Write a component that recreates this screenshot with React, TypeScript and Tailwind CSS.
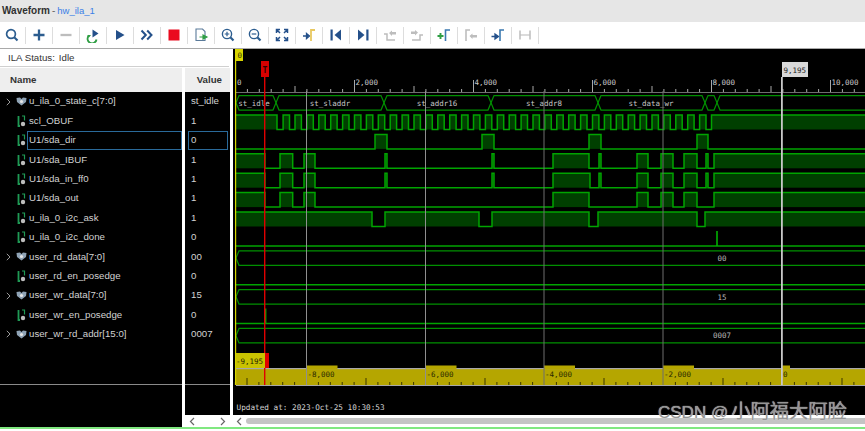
const rows = [
  { name: "u_ila_0_state_c[7:0]", value: "st_idle", bus: true },
  { name: "scl_OBUF", value: "1" },
  { name: "U1/sda_dir", value: "0", selected: true },
  { name: "U1/sda_IBUF", value: "1" },
  { name: "U1/sda_in_ff0", value: "1" },
  { name: "U1/sda_out", value: "1" },
  { name: "u_ila_0_i2c_ask", value: "1" },
  { name: "u_ila_0_i2c_done", value: "0" },
  { name: "user_rd_data[7:0]", value: "00", bus: true },
  { name: "user_rd_en_posedge", value: "0" },
  { name: "user_wr_data[7:0]", value: "15", bus: true },
  { name: "user_wr_en_posedge", value: "0" },
  { name: "user_wr_rd_addr[15:0]", value: "0007", bus: true },
];

const END = 865;
const START = 236;
const rowTop = (i: number) => 95.6 + 19.4 * i;

const sclHighs: number[][] = [[START, 277]];
for (let k = -1; k <= 34; k++) sclHighs.push([295 + 11.9 * k, 295 + 11.9 * k + 6.4]);
sclHighs.push([711.5, END]);

const digital: { row: number; highs: number[][] }[] = [
  { row: 1, highs: sclHighs },
  { row: 2, highs: [[375, 387], [482, 494], [589, 601], [697, 708]] },
  { row: 3, highs: [[START, 265], [280, 292.7], [304, 315], [385, 387], [492, 494], [553, 589], [599, 601], [637, 648], [661, 673], [684, 697], [706, 708], [714, END]] },
  { row: 4, highs: [[START, 265], [280, 292.7], [304, 315], [385, 387], [492, 494], [553, 590], [599, 601], [637, 648], [661, 673], [684, 697], [706, 708], [714, END]] },
  { row: 5, highs: [[START, 265], [280, 292.7], [304, 315], [553, 589], [637, 648], [661, 673], [684, 697], [714, END]] },
  { row: 6, highs: [[START, 372], [385, 479], [492, 589], [598, 697], [705, END]] },
  { row: 7, highs: [] },
  { row: 9, highs: [] },
  { row: 11, highs: [] },
];

const stateSegs = [
  { x1: START, x2: 276, label: "st_idle", cx: 254 },
  { x1: 276, x2: 384, label: "st_sladdr", cx: 330 },
  { x1: 384, x2: 491, label: "st_addr16", cx: 437 },
  { x1: 491, x2: 598, label: "st_addr8", cx: 544 },
  { x1: 598, x2: 705, label: "st_data_wr", cx: 651 },
  { x1: 705, x2: 717, label: "", cx: 0 },
  { x1: 717, x2: END + 6, label: "", cx: 0 },
];

const otherBus = [
  { row: 8, label: "00" },
  { row: 10, label: "15" },
  { row: 12, label: "0007" },
];

const gridLines = [
  { x: 306.5, c: "#8f8f8f" },
  { x: 425.5, c: "#8f8f8f" },
  { x: 544, c: "#6f6f6f" },
  { x: 663, c: "#6f6f6f" },
];

const topLabels = [
  { x: 355.5, t: "2,000" },
  { x: 474.5, t: "4,000" },
  { x: 593.5, t: "6,000" },
  { x: 712.5, t: "8,000" },
  { x: 831.5, t: "10,000" },
];

const bottomTags = [
  { x: 306.5, t: "-8,000", w: 31 },
  { x: 425.5, t: "-6,000", w: 31 },
  { x: 544, t: "-4,000", w: 31 },
  { x: 663, t: "-2,000", w: 31 },
  { x: 782, t: "0", w: 8 },
];

function wavePath(top: number, highs: number[][]) {
  const bot = top + 14.5;
  let d = `M${START} ${highs.length && highs[0][0] <= START ? top : bot}`;
  for (const [a, b] of highs) {
    if (a > START) d += ` L${a} ${bot} L${a} ${top}`;
    d += ` L${b} ${top}`;
    if (b < END) d += ` L${b} ${bot}`;
  }
  if (!highs.length || highs[highs.length - 1][1] < END) d += ` L${END} ${bot}`;
  return d;
}

function hexagon(x1: number, x2: number, top: number) {
  const bot = top + 14.5;
  const mid = top + 7.25;
  return `M${x1} ${mid} L${x1 + 3} ${top} L${x2 - 3} ${top} L${x2} ${mid} L${x2 - 3} ${bot} L${x1 + 3} ${bot} Z`;
}

function Waveform() {
  const topTicks = Array.from({ length: 54 }, (_, k) => k);
  const bottomTicks = Array.from({ length: 54 }, (_, k) => k - 7);

  return (
    <svg width={632} height={366} viewBox="233 49 632 366" className="block bg-black">
      {/* signals */}
      {digital.map((s) => {
        const top = rowTop(s.row);
        return (
          <g key={s.row}>
            {s.highs.map(([a, b]) => (
              <rect key={a} x={a} y={top} width={b - a} height={14.5} fill="#003f00" />
            ))}
            <path d={wavePath(top, s.highs)} fill="none" stroke="#00a400" strokeWidth={1.5} />
          </g>
        );
      })}
      <rect x={716.2} y={231} width={1.6} height={15} fill="#00b000" />
      <rect x={265} y={308.5} width={1.4} height={15} fill="#00b000" />

      {stateSegs.map((s) => (
        <path key={s.x1} d={hexagon(s.x1, s.x2, rowTop(0))} fill="none" stroke="#009000" strokeWidth={1.2} />
      ))}
      {otherBus.map((b) => (
        <path key={b.row} d={hexagon(START, END + 6, rowTop(b.row))} fill="none" stroke="#009000" strokeWidth={1.2} />
      ))}
      {stateSegs.map((s) =>
        s.label ? (
          <text key={s.label} x={s.cx} y={106} textAnchor="middle" className="fill-[#c8c8c8] font-['DejaVu_Sans_Mono'] text-[7.5px]">
            {s.label}
          </text>
        ) : null
      )}
      {otherBus.map((b) => (
        <text key={b.row} x={722} y={rowTop(b.row) + 10} textAnchor="middle" className="fill-[#b8b8b8] font-['DejaVu_Sans_Mono'] text-[7.5px]">
          {b.label}
        </text>
      ))}

      {/* top ruler */}
      <rect x={236} y={92} width={629} height={0.8} fill="#8a8a8a" />
      {topTicks.map((k) => {
        const x = 235 + 11.9 * k;
        const h = k % 10 === 0 ? 12 : k % 5 === 0 ? 6 : 3;
        return <rect key={k} x={x} y={92 - h} width={1} height={h} fill="#a8a8a8" />;
      })}
      <text x={237} y={85} className="fill-[#c8c8c8] font-['DejaVu_Sans_Mono'] text-[7.5px]">0</text>
      {topLabels.map((l) => (
        <text key={l.t} x={l.x} y={85} className="fill-[#c8c8c8] font-['DejaVu_Sans_Mono'] text-[7.5px]">{l.t}</text>
      ))}

      {/* bottom ruler */}
      <rect x={236} y={369} width={629} height={16} fill="#b5a600" />
      <rect x={236} y={368} width={629} height={1.2} fill="#a8a8a8" />
      <rect x={236} y={385} width={629} height={1} fill="#a8a8a8" />
      {bottomTicks.map((k) => {
        const h = k % 10 === 0 ? 0 : k % 5 === 0 ? 7 : 3;
        return h ? <rect key={k} x={782 - 11.9 * k} y={385 - h} width={1} height={h} fill="#3a3600" /> : null;
      })}
      {bottomTags.map((t) => (
        <g key={t.t}>
          <rect x={t.x} y={365.5} width={t.w} height={4} fill="#b5a600" />
          <text x={t.x + 1} y={377} className="fill-[#2a2a00] font-['DejaVu_Sans_Mono'] text-[7.5px]">{t.t}</text>
        </g>
      ))}

      {/* grid and cursors */}
      {gridLines.map((g) => (
        <rect key={g.x} x={g.x - 0.5} y={91} width={1} height={294} fill={g.c} />
      ))}
      <rect x={781} y={77} width={1.8} height={308} fill="#c8c8c8" />
      <rect x={782} y={62} width={26} height={15} fill="#d8d8d8" />
      <text x={783.5} y={73} className="fill-[#222222] font-['DejaVu_Sans_Mono'] text-[7.5px]">9,195</text>

      <rect x={264} y={77} width={1.4} height={308} fill="#e00000" />
      <rect x={261} y={61} width={8} height={16} fill="#d80000" />
      <text x={265} y={73} textAnchor="middle" className="fill-[#300000] font-['DejaVu_Sans_Mono'] text-[8px] font-bold">T</text>

      <rect x={235} y={49} width={1.2} height={336} fill="#d8d800" />
      <rect x={236} y={49} width={7} height={12} fill="#d8d400" />
      <text x={237.5} y={58} className="fill-[#333300] font-['DejaVu_Sans_Mono'] text-[7.5px]">0</text>

      <rect x={236} y={353} width={29} height={15} fill="#c9c200" />
      <rect x={265} y={353} width={4} height={15} fill="#e00000" />
      <text x={236} y={364} className="fill-[#222200] font-['DejaVu_Sans_Mono'] text-[7.5px]">-9,195</text>

      <text x={236.5} y={410} className="fill-[#d0d0d0] font-['DejaVu_Sans_Mono'] text-[7.7px]">Updated at: 2023-Oct-25 10:30:53</text>
    </svg>
  );
}

function BusIcon() {
  return (
    <svg width={11} height={9} viewBox="0 0 11 9" className="shrink-0">
      <path d="M0.5 1 L4 0.5 L5.5 2 L7 0.5 L10.5 1 L10 5 L5.5 8.5 L1 5 Z" fill="#8fa3b5" />
      <circle cx={5.5} cy={4.5} r={1.6} fill="#e6e6e6" />
    </svg>
  );
}

function WireIcon() {
  return (
    <svg width={10} height={12} viewBox="0 0 10 12" className="ml-px shrink-0">
      <path d="M1.5 1 V11 H3" stroke="#1f9a55" strokeWidth={1.8} fill="none" />
      <path d="M5 1 H7.5 V5.5" stroke="#1f9a55" strokeWidth={1.2} fill="none" />
      <circle cx={6} cy={9} r={2.2} fill="#bdbdbd" />
    </svg>
  );
}

const blue = "#2c5d8f";
const navy = "#24508a";
const off = "#bdbdbd";

const toolIcons = [
  <g key="search" fill="none" stroke={blue} strokeWidth={1.7}><circle cx={7} cy={7} r={4.4} /><path d="M10.2 10.2 L13.5 13.5" strokeWidth={2.1} /></g>,
  <path key="plus" d="M8 2.5 V13.5 M2.5 8 H13.5" stroke={blue} strokeWidth={2.3} fill="none" />,
  <path key="minus" d="M2.5 8 H13.5" stroke={off} strokeWidth={2.3} fill="none" />,
  <g key="reload"><path d="M4 8.5 A4.5 4.5 0 1 0 11.5 12.5" stroke="#2f9e44" strokeWidth={1.8} fill="none" /><path d="M2.2 8 L6 8 L4 10.5 Z" fill="#2f9e44" /><path d="M7.5 2.5 L13.5 6.5 L7.5 10.5 Z" fill={navy} /></g>,
  <path key="play" d="M4 3 L12.5 8 L4 13 Z" fill={navy} />,
  <path key="ff" d="M2.5 3.5 L6.8 8 L2.5 12.5 M8.2 3.5 L12.5 8 L8.2 12.5" stroke={navy} strokeWidth={2} fill="none" />,
  <rect key="stop" x={2.5} y={2.5} width={11} height={11} fill="#ea0a1e" />,
  <g key="export"><path d="M3 2 H9.5 L12 4.5 V13.5 H3 Z" fill="#fff" stroke="#5a7a9a" strokeWidth={1.1} /><path d="M6.5 10 H11 M10 8 L14 10 L10 12 Z" stroke="#2f9e44" fill="#2f9e44" strokeWidth={1.1} /></g>,
  <g key="zin" fill="none" stroke={blue}><circle cx={7} cy={7} r={4.6} strokeWidth={1.4} /><path d="M10.3 10.3 L13.5 13.5" strokeWidth={2.2} /><path d="M4.7 7 H9.3 M7 4.7 V9.3" strokeWidth={1.2} /></g>,
  <g key="zout" fill="none" stroke={blue}><circle cx={7} cy={7} r={4.6} strokeWidth={1.4} /><path d="M10.3 10.3 L13.5 13.5" strokeWidth={2.2} /><path d="M4.7 7 H9.3" strokeWidth={1.2} /></g>,
  <g key="fit" fill="none" stroke={navy} strokeWidth={1.5}><path d="M2.5 6 V2.5 H6 M2.5 2.5 L6 6" /><path d="M13.5 6 V2.5 H10 M13.5 2.5 L10 6" /><path d="M2.5 10 V13.5 H6 M2.5 13.5 L6 10" /><path d="M13.5 10 V13.5 H10 M13.5 13.5 L10 10" /></g>,
  <g key="mark"><path d="M2 9 H6 M5.5 6.5 L8.5 9 L5.5 11.5 Z" stroke={navy} fill={navy} strokeWidth={1.3} /><path d="M10 14 V3 H14" stroke="#e8c860" strokeWidth={1.8} fill="none" /></g>,
  <g key="prev" fill={navy}><rect x={2.5} y={2.5} width={2.2} height={11} /><path d="M13 2.5 V13.5 L6.5 8 Z" /></g>,
  <g key="next" fill={navy}><rect x={11.3} y={2.5} width={2.2} height={11} /><path d="M3 2.5 V13.5 L9.5 8 Z" /></g>,
  <g key="o1"><path d="M2 7 H5 V13 H13" stroke={off} strokeWidth={1.5} fill="none" /><path d="M7 6 L10 3.5 V5 H14 V7.5 H10 V9 Z" fill={off} /></g>,
  <g key="o2"><path d="M14 8 H11 V13 H3" stroke={off} strokeWidth={1.5} fill="none" /><path d="M9 5.5 L6 3 V4.5 H2 V7 H6 V8.5 Z" fill={off} /></g>,
  <g key="add"><path d="M1.5 9 H7.5 M4.5 6 V12" stroke="#2f9e44" strokeWidth={1.9} fill="none" /><path d="M9.5 14 V3 H14" stroke="#3a78b0" strokeWidth={1.6} fill="none" /></g>,
  <g key="o3"><path d="M3 14 V3 H7" stroke={off} strokeWidth={1.6} fill="none" /><path d="M6.5 9 L9.5 6.5 V8 H14 V10.5 H9.5 V12 Z" fill={off} /></g>,
  <g key="goto"><path d="M1.5 9.5 H5 M5 7 L8.5 9.5 L5 12 Z" stroke={navy} fill={navy} strokeWidth={1.3} /><path d="M10 14 V3 H14" stroke="#3a78b0" strokeWidth={1.6} fill="none" /></g>,
  <g key="o4" stroke={off} fill="none"><path d="M3 3.5 V12.5 M13 3.5 V12.5" strokeWidth={1.5} /><path d="M3 8 H13" strokeWidth={1.1} /></g>,
];

export default function App() {
  return (
    <div className="relative flex h-[431px] w-[865px] flex-col overflow-hidden bg-white font-['Liberation_Sans',sans-serif]">
      <div className="flex h-[22px] items-center bg-[#e6e6e6] pl-[2px] text-[10px] leading-none">
        <span className="font-bold text-[#303030]">Waveform</span>
        <span className="mx-[2px] text-[#666666]">-</span>
        <span className="text-[9.5px] text-[#3b7fe6]">hw_ila_1</span>
      </div>

      <div className="-ml-px flex h-[27px] items-center border-b border-[#a9a9a9] bg-white">
        {toolIcons.map((icon, i) => (
          <div key={i} className="flex h-[17px] w-[27px] shrink-0 items-center justify-center border-r border-[#dddddd]">
            <svg width={16} height={16} viewBox="0 0 16 16">{icon}</svg>
          </div>
        ))}
      </div>

      <div className="flex h-[378px]">
        <div className="flex w-[233px] shrink-0 flex-col">
          <div className="mb-[2px] mt-px flex h-[16px] w-[229px] items-center bg-white pl-[8px] text-[9.7px] text-[#333333] shadow-[0_1px_0_#d0d0d0]">
            <span>ILA Status:</span>
            <span className="ml-[4px]">Idle</span>
          </div>
          <div className="flex flex-1">
            <div className="flex w-[182px] flex-col bg-black">
              <div className="flex h-[24px] items-center bg-[#eeeeee] pl-[10px] text-[9.7px] font-bold text-[#333333]">Name</div>
              <div className="h-[293px] border-b border-[#8a8a8a]">
                {rows.map((r) => (
                  <div key={r.name} className="relative flex h-[19.4px] items-center text-[9.7px] text-[#d2d2d2]">
                    <div className="flex w-[16px] justify-end pr-[5px]">
                      {r.bus && (
                        <svg width={5} height={8} viewBox="0 0 5 8">
                          <path d="M0.8 0.8 L4 4 L0.8 7.2" stroke="#9a9a9a" strokeWidth={1} fill="none" />
                        </svg>
                      )}
                    </div>
                    <div className="flex w-[13px] justify-start">{r.bus ? <BusIcon /> : <WireIcon />}</div>
                    <span className="whitespace-nowrap">{r.name}</span>
                    {r.selected && <div className="absolute inset-y-0 left-[27px] right-0 border border-[#2a6a9a]" />}
                  </div>
                ))}
              </div>
            </div>
            <div className="ml-[3px] flex w-[45px] flex-col">
              <div className="flex h-[24px] items-center justify-end bg-[#eeeeee] pr-[8px] text-[9.7px] font-bold text-[#333333]">Value</div>
              <div className="h-[293px] border-b border-[#8a8a8a] bg-black">
                {rows.map((r) => (
                  <div key={r.name} className="relative flex h-[19.4px] items-center pl-[6px] text-[9.7px] text-[#d2d2d2]">
                    {r.value}
                    {r.selected && <div className="absolute inset-y-0 left-[3px] right-[2px] border border-[#2a6a9a]" />}
                  </div>
                ))}
              </div>
              <div className="flex-1 bg-black" />
              <div className="flex h-[12px] items-center justify-between bg-white px-[4px]">
                <svg width={6} height={9} viewBox="0 0 6 9"><path d="M5 1 L1.5 4.5 L5 8" stroke="#666666" strokeWidth={1.2} fill="none" /></svg>
                <svg width={6} height={9} viewBox="0 0 6 9"><path d="M1 1 L4.5 4.5 L1 8" stroke="#666666" strokeWidth={1.2} fill="none" /></svg>
              </div>
            </div>
          </div>
        </div>

        <div className="flex w-[632px] flex-col">
          <Waveform />
          <div className="flex h-[12px] items-center bg-white pl-[3px]">
            <svg width={6} height={9} viewBox="0 0 6 9" className="shrink-0"><path d="M5 1 L1.5 4.5 L5 8" stroke="#666666" strokeWidth={1.2} fill="none" /></svg>
            <div className="ml-[4px] h-[6px] flex-1 rounded-l-[3px] bg-[#c4c4c4]" />
          </div>
        </div>
      </div>

      <div className="h-[2px] bg-[#80e880]" />

      <div className="absolute left-[658px] top-[400px] whitespace-nowrap font-['Liberation_Sans','Noto_Sans_CJK_SC',sans-serif] text-[17px] leading-[24px] text-[#959595] [text-shadow:0_0_1px_#e8e8e8]">
        CSDN @<span className="ml-[3px] text-[19.3px]">小阿福大阿脸</span>
      </div>
    </div>
  );
}
